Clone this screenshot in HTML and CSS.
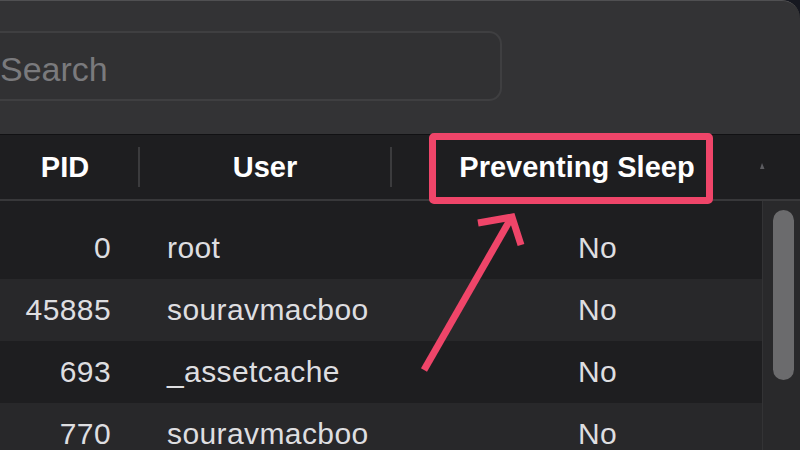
FILE: index.html
```html
<!DOCTYPE html>
<html>
<head>
<meta charset="utf-8">
<link rel="stylesheet" href="styles.css">
</head>
<body>
<div class="window">
  <div class="toolbar">
    <div class="search"><span class="placeholder">Search</span></div>
  </div>
  <div class="header">
    <div class="hcell col-pid"><span>PID</span></div>
    <div class="hcell col-user"><span>User</span></div>
    <div class="hcell col-sleep nosep"><span>Preventing Sleep</span></div>
    <div class="hcell col-sort nosep">
      <svg class="sort" width="8" height="8" viewBox="0 0 8 8"><path d="M4 1 L6.5 7 L2 7 Z" fill="#5c5c60"/></svg>
    </div>
  </div>
  <div class="body">
    <div class="rows">
      <div class="row dark"><div class="c-pid">0</div><div class="c-user">root</div><div class="c-sleep">No</div></div>
      <div class="row light"><div class="c-pid">45885</div><div class="c-user">souravmacboo</div><div class="c-sleep">No</div></div>
      <div class="row dark"><div class="c-pid">693</div><div class="c-user">_assetcache</div><div class="c-sleep">No</div></div>
      <div class="row light"><div class="c-pid">770</div><div class="c-user">souravmacboo</div><div class="c-sleep">No</div></div>
    </div>
    <div class="scroll"><div class="thumb"></div></div>
  </div>
  <div class="highlight"></div>
  <svg class="arrow" width="800" height="450" viewBox="0 0 800 450">
    <g stroke="#ef4569" stroke-width="7" stroke-linecap="butt" stroke-linejoin="miter" fill="none">
      <path d="M424 370 L510 220"/>
      <path d="M478 223 L512 217 L521 245"/>
    </g>
  </svg>
</div>
</body>
</html>
```
FILE: styles.css
```css
html, body {
  margin: 0;
  padding: 0;
}
body {
  background: #161820;
  width: 800px;
  height: 450px;
  overflow: hidden;
  font-family: "Liberation Sans", Arial, Helvetica, sans-serif;
}
.window {
  position: relative;
  width: 800px;
  height: 450px;
  background: #1e1e20;
  border-top-right-radius: 18px;
  overflow: hidden;
  display: flex;
  flex-direction: column;
}
.toolbar {
  height: 134px;
  box-sizing: border-box;
  background: #333335;
  border-top: 1px solid #505052;
  border-top-right-radius: 18px;
  padding-top: 30px;
  flex: none;
}
.search {
  margin-left: -22px;
  width: 524px;
  height: 70px;
  box-sizing: border-box;
  border: 2px solid #3f3f41;
  border-radius: 13px;
  background: #313133;
  display: flex;
  align-items: center;
  padding-left: 20px;
  padding-top: 6px;
}
.placeholder {
  font-size: 34px;
  color: #7a7a7d;
}
.header {
  height: 67px;
  box-sizing: border-box;
  border-top: 1px solid #111113;
  border-bottom: 2px solid #38383a;
  background: #1e1e20;
  display: flex;
  align-items: center;
  flex: none;
}
.hcell {
  height: 40px;
  box-sizing: border-box;
  display: flex;
  align-items: center;
  justify-content: center;
  border-right: 2px solid #3b3b3d;
  font-weight: bold;
  font-size: 29px;
  color: #ffffff;
}
.hcell.nosep {
  border-right: none;
}
.col-pid { width: 140px; padding-right: 8px; }
.col-user { width: 252px; }
.col-sleep { width: 370px; }
.col-sort {
  width: 38px;
  justify-content: flex-start;
  padding-left: 0;
}
.sort {
  margin-left: -4px;
  margin-top: -2px;
}
.body {
  flex: 1;
  display: flex;
  min-height: 0;
}
.rows {
  width: 762px;
  padding-top: 16px;
  background: #1e1e20;
  flex: none;
}
.row {
  height: 62px;
  display: flex;
  align-items: center;
  font-size: 30px;
  letter-spacing: 0.4px;
  color: #dedee0;
}
.row.dark { background: #1e1e20; }
.row.light { background: #28282a; }
.c-pid {
  width: 139px;
  box-sizing: border-box;
  text-align: right;
  padding-right: 28px;
}
.c-user {
  width: 252px;
  box-sizing: border-box;
  padding-left: 28px;
}
.c-sleep {
  width: 371px;
  box-sizing: border-box;
  padding-left: 42px;
  text-align: center;
}
.scroll {
  flex: 1;
  background: #29292b;
  border-left: 1px solid #333335;
  padding: 9px 6px 0 10px;
}
.thumb {
  width: 21px;
  height: 170px;
  border-radius: 11px;
  background: #6b6b6d;
}
.highlight {
  position: absolute;
  left: 429px;
  top: 133px;
  width: 284px;
  height: 71px;
  box-sizing: border-box;
  border: 7px solid #ef4569;
  border-radius: 5px;
}
.arrow {
  position: absolute;
  left: 0;
  top: 0;
}
```
